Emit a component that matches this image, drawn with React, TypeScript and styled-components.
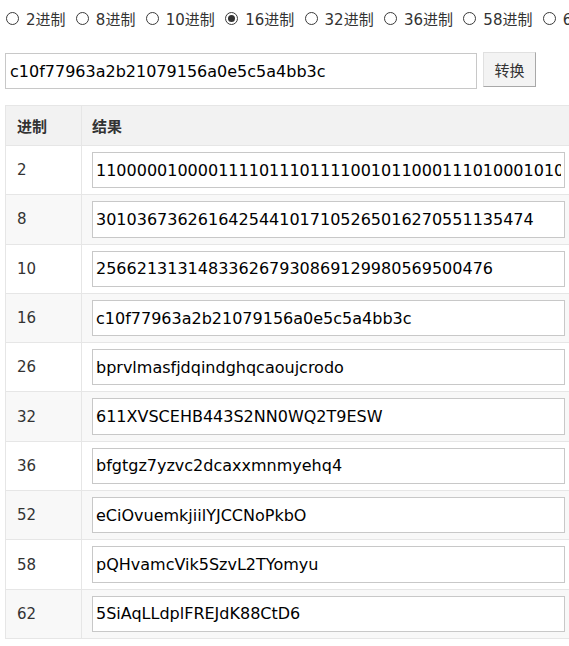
import React, { useState } from 'react';
import styled, { createGlobalStyle } from 'styled-components';

const GlobalStyle = createGlobalStyle`
html, body {
    margin: 0;
    padding: 0;
    overflow: hidden;
    background: #fff;
}
body {
    font-family: "DejaVu Sans", Verdana, "Noto Sans CJK SC", sans-serif;
    color: #333;
}
`;

const bases = [2, 8, 10, 16, 32, 36, 58, 62];

const results: { base: number; value: string }[] = [
    { base: 2, value: '11000001000011110111011110010110001110100010101100100001000001111001000101010110101000001110010111000101101001001011101100111100' },
    { base: 8, value: '3010367362616425441017105265016270551135474' },
    { base: 10, value: '256621313148336267930869129980569500476' },
    { base: 16, value: 'c10f77963a2b21079156a0e5c5a4bb3c' },
    { base: 26, value: 'bprvlmasfjdqindghqcaoujcrodo' },
    { base: 32, value: '611XVSCEHB443S2NN0WQ2T9ESW' },
    { base: 36, value: 'bfgtgz7yzvc2dcaxxmnmyehq4' },
    { base: 52, value: 'eCiOvuemkjiilYJCCNoPkbO' },
    { base: 58, value: 'pQHvamcVik5SzvL2TYomyu' },
    { base: 62, value: '5SiAqLLdplFREJdK88CtD6' },
];

const Page = styled.div`
    padding-left: 5px;
    width: 600px;
`;

const RadioRow = styled.div`
    display: flex;
    align-items: center;
    height: 36px;
    white-space: nowrap;
    font-size: 15px;
`;

const RadioItem = styled.label`
    display: flex;
    align-items: center;
    margin-right: 9.3px;
    cursor: pointer;
`;

const RadioMark = styled.span<{ $checked: boolean }>`
    position: relative;
    width: 11px;
    height: 11px;
    border: 1px solid #3a3a3a;
    border-radius: 50%;
    background: #fff;
    margin: 0 7px 0 1px;
    flex: none;
    &::after {
        content: '';
        display: ${(p) => (p.$checked ? 'block' : 'none')};
        position: absolute;
        left: 2px;
        top: 2px;
        width: 7px;
        height: 7px;
        border-radius: 50%;
        background: #333;
    }
`;

const ConvertRow = styled.div`
    display: flex;
    align-items: flex-start;
    gap: 6px;
    margin-top: 17px;
`;

const SourceInput = styled.input`
    box-sizing: border-box;
    width: 472px;
    height: 36px;
    padding: 0 4px;
    border: 1px solid #c8c8c8;
    font-family: inherit;
    font-size: 16px;
    color: #000;
    outline: none;
`;

const ConvertButton = styled.button`
    box-sizing: border-box;
    width: 53px;
    height: 35px;
    margin-top: -1px;
    background: #f3f3f3;
    border: 1px solid #e0e0e0;
    border-right-color: #a8a8a8;
    border-bottom-color: #a8a8a8;
    font-family: inherit;
    font-size: 15px;
    color: #333;
    padding: 0;
`;

const Table = styled.table`
    margin-top: 16px;
    border-collapse: collapse;
    width: 572px;
    font-size: 15px;
`;

const HeadCell = styled.th<{ $first?: boolean }>`
    background: #f2f2f2;
    border: 1px solid #e6e6e6;
    height: 39px;
    padding: 0 10px 0 ${(p) => (p.$first ? '11px' : '10px')};
    text-align: left;
    font-weight: bold;
    color: #333;
    width: ${(p) => (p.$first ? '54px' : 'auto')};
`;

const Row = styled.tr<{ $shaded: boolean }>`
    background: ${(p) => (p.$shaded ? '#f8f8f8' : '#fff')};
`;

const Cell = styled.td<{ $first?: boolean }>`
    border: 1px solid #e6e6e6;
    padding: 6px 10px 6px ${(p) => (p.$first ? '11px' : '10px')};
    color: #333;
`;

const ResultInput = styled.input`
    box-sizing: border-box;
    display: block;
    width: 473px;
    height: 36.3px;
    padding: 0 3px;
    border: 1px solid #c8c8c8;
    background: #fff;
    font-family: inherit;
    font-size: 16px;
    color: #000;
    outline: none;
`;

export default function App() {
    const [base, setBase] = useState(16);
    return (
        <Page>
            <GlobalStyle />
            <RadioRow>
                {bases.map((b) => (
                    <RadioItem key={b} onClick={() => setBase(b)}>
                        <RadioMark $checked={b === base} />
                        {b}进制
                    </RadioItem>
                ))}
            </RadioRow>
            <ConvertRow>
                <SourceInput defaultValue="c10f77963a2b21079156a0e5c5a4bb3c" />
                <ConvertButton>转换</ConvertButton>
            </ConvertRow>
            <Table>
                <thead>
                    <tr>
                        <HeadCell $first>进制</HeadCell>
                        <HeadCell>结果</HeadCell>
                    </tr>
                </thead>
                <tbody>
                    {results.map((r, i) => (
                        <Row key={r.base} $shaded={i % 2 === 1}>
                            <Cell $first>{r.base}</Cell>
                            <Cell>
                                <ResultInput readOnly value={r.value} />
                            </Cell>
                        </Row>
                    ))}
                </tbody>
            </Table>
        </Page>
    );
}
